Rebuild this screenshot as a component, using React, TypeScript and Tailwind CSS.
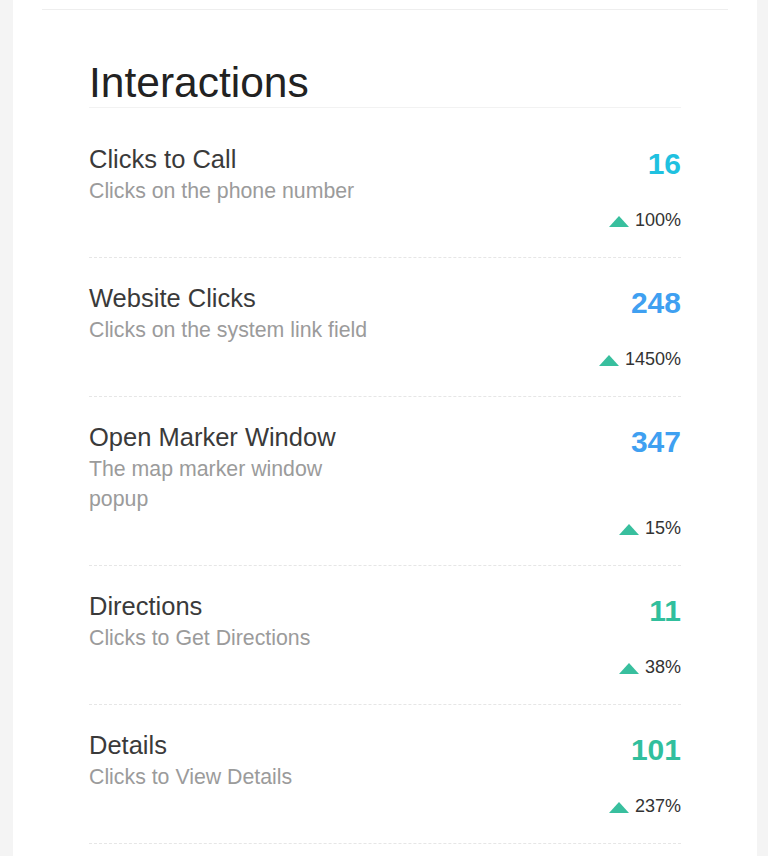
import React from 'react';

type Metric = {
  title: string;
  desc: string;
  value: string;
  change: string;
  color: string;
};

const metrics: Metric[] = [
  { title: 'Clicks to Call', desc: 'Clicks on the phone number', value: '16', change: '100%', color: 'text-[#1fc1e0]' },
  { title: 'Website Clicks', desc: 'Clicks on the system link field', value: '248', change: '1450%', color: 'text-[#3fa0f1]' },
  { title: 'Open Marker Window', desc: 'The map marker window popup', value: '347', change: '15%', color: 'text-[#3fa0f1]' },
  { title: 'Directions', desc: 'Clicks to Get Directions', value: '11', change: '38%', color: 'text-[#31bf9d]' },
  { title: 'Details', desc: 'Clicks to View Details', value: '101', change: '237%', color: 'text-[#31bf9d]' },
];

const UpTriangle = () => (
  <svg width="20" height="11" viewBox="0 0 20 11" className="mt-[2px]">
    <polygon points="10,0 20,11 0,11" fill="#38bf9e" />
  </svg>
);

const MetricRow = ({ m }: { m: Metric }) => (
  <div className="flex justify-between pt-[23px] pb-[25px] border-b border-dashed border-[#e6e6e6]">
    <div className="w-[288px] pb-[26px]">
      <div className="text-[25.5px] leading-[34px] text-[#3a3a3a]">{m.title}</div>
      <div className="text-[21.3px] leading-[30px] text-[#9b9b9b]">{m.desc}</div>
    </div>
    <div className="flex flex-col items-end justify-between">
      <div className={`text-[30px] leading-[44px] font-bold ${m.color}`}>{m.value}</div>
      <div className="flex items-center gap-[6px] text-[18px] leading-[24px] text-[#333333]">
        <UpTriangle />
        <span>{m.change}</span>
      </div>
    </div>
  </div>
);

export default function App() {
  return (
    <div className="min-h-screen bg-[#f4f4f4] font-['Liberation_Sans',Arial,sans-serif]">
      <div className="ml-[13px] w-[744px] bg-white px-[29px] pb-10">
        <div className="h-[10px] border-b border-[#eeeeee]" />
        <div className="px-[47px] pt-[52px]">
          {/* Header */}
          <h2 className="text-[42.5px] leading-[42px] text-[#222222] pb-[3px] border-b border-[#f2f2f2]">
            Interactions
          </h2>

          {/* Rows */}
          <div className="mt-[11px]">
            {metrics.map((m) => (
              <MetricRow key={m.title} m={m} />
            ))}
          </div>
        </div>
      </div>
    </div>
  );
}
